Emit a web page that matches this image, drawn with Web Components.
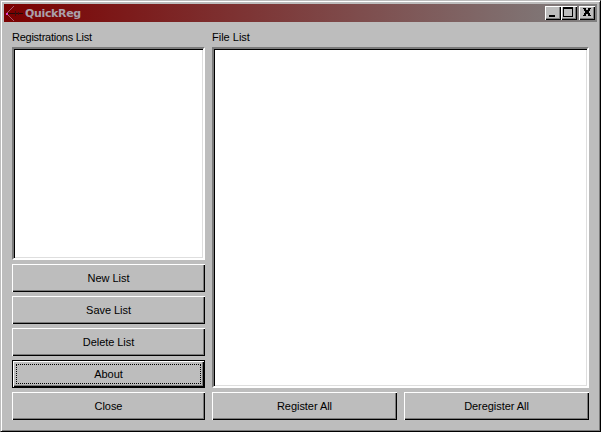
<!DOCTYPE html>
<html><head><meta charset="utf-8"><style>
html,body{margin:0;padding:0;background:#bdbdbd}
body{width:601px;height:432px;overflow:hidden;font:11px "Liberation Sans",sans-serif;color:#000}
</style></head><body>
<qr-window title="QuickReg">
  <qr-list label="Registrations List" tight style="grid-area:a"></qr-list>
  <qr-list label="File List" style="grid-area:f"></qr-list>
  <qr-button style="grid-area:n">New List</qr-button>
  <qr-button style="grid-area:s">Save List</qr-button>
  <qr-button style="grid-area:d">Delete List</qr-button>
  <qr-button default style="grid-area:b">About</qr-button>
  <qr-button style="grid-area:c">Close</qr-button>
  <qr-button style="grid-area:r">Register All</qr-button>
  <qr-button style="grid-area:g">Deregister All</qr-button>
</qr-window>
<script>
class QrWindow extends HTMLElement{constructor(){super();const r=this.attachShadow({mode:'open'});
r.innerHTML=`<style>
:host{display:flex;flex-direction:column;box-sizing:border-box;width:601px;height:432px;background:#bdbdbd;
border:1px solid;border-color:#bdbdbd #000 #000 #bdbdbd;box-shadow:inset 1px 1px 0 #fff,inset -1px -1px 0 #7b7b7b;padding:3px}
.bar{height:18px;flex:none;display:flex;align-items:center;background:linear-gradient(90deg,#7b0000,#808080);padding:0 2px 0 0}
.ico{width:18px;height:18px;flex:none;margin-left:1px;display:block}
.t{font:bold 11px "DejaVu Sans",sans-serif;color:#aaa0aa;margin-left:2px;flex:1;letter-spacing:-.35px}
.caps{display:flex}
.caps qr-cap:last-child{margin-left:2px}
.main{flex:1;display:grid;padding:8px;
grid-template-columns:193px 185px 185px;column-gap:7px;
grid-template-rows:230px 28px 28px 28px 28px 28px;row-gap:4px;
grid-template-areas:"a f f" "n f f" "s f f" "d f f" "b f f" "c r g"}
</style>
<div class="bar"><svg class="ico" viewBox="0 0 18 18" shape-rendering="crispEdges"><path d="M2 9 9 2M2 10 9 17" stroke="#a85a70" stroke-width="1" fill="none"/><path d="M3 9.5H18" stroke="#2a0808" stroke-width="1"/><path d="M10.5 7v5M13.5 8v3" stroke="#3a1010" stroke-width="1"/><rect x="1" y="8.5" width="2" height="2" fill="#e040d0"/></svg><span class="t">${this.getAttribute('title')}</span>
<div class="caps"><qr-cap kind="min"></qr-cap><qr-cap kind="max"></qr-cap><qr-cap kind="close"></qr-cap></div></div>
<div class="main"><slot></slot></div>`;}}
class QrCap extends HTMLElement{constructor(){super();const r=this.attachShadow({mode:'open'});
const k=this.getAttribute('kind');
const g={min:'<rect x="4" y="9" width="6" height="2" fill="#000"/>',
max:'<path d="M2.5 1.5h9v9h-9z" fill="none" stroke="#000"/><path d="M2 2.5h10" stroke="#000"/>',
close:'<path d="M4 2 10.5 10M5.5 2 12 10M10.5 2 4 10M12 2 5.5 10" stroke="#000" fill="none"/>'}[k];
r.innerHTML=`<style>:host{display:block;width:16px;height:14px;background:#bdbdbd;box-sizing:border-box;
box-shadow:inset 1px 1px 0 #fff,inset -1px -1px 0 #000,inset -2px -2px 0 #7b7b7b}svg{display:block;width:14px;height:13px}</style>
<svg viewBox="0 0 14 13" shape-rendering="crispEdges">${g}</svg>`;}}
class QrList extends HTMLElement{constructor(){super();const r=this.attachShadow({mode:'open'});
r.innerHTML=`<style>:host{display:flex;flex-direction:column;min-height:0}
.l{height:17px;line-height:15px;flex:none;color:#000;${this.hasAttribute('tight')?'letter-spacing:-.25px;':''}}
.b{flex:1;background:#fff;box-sizing:border-box;border:2px solid;border-color:#7b7b7b #fff #fff #7b7b7b;box-shadow:inset 1px 1px 0 #000,inset -1px -1px 0 #dedede}</style>
<div class="l">${this.getAttribute('label')}</div><div class="b"></div>`;}}
class QrButton extends HTMLElement{constructor(){super();const r=this.attachShadow({mode:'open'});
const d=this.hasAttribute('default');
r.innerHTML=`<style>:host{display:flex;align-items:center;justify-content:center;box-sizing:border-box;background:#bdbdbd;position:relative;
${d?'border:1px solid #000;':''}box-shadow:inset 1px 1px 0 #fff,inset -1px -1px 0 #000,inset -2px -2px 0 #7b7b7b}
.f{position:absolute;inset:3px;border:1px dotted #000}
span{color:#000;font:11px "Liberation Sans",sans-serif;letter-spacing:-.05px}</style>
${d?'<div class="f"></div>':''}<span><slot></slot></span>`;}}
customElements.define('qr-cap',QrCap);customElements.define('qr-window',QrWindow);customElements.define('qr-list',QrList);customElements.define('qr-button',QrButton);
</script></body></html>
